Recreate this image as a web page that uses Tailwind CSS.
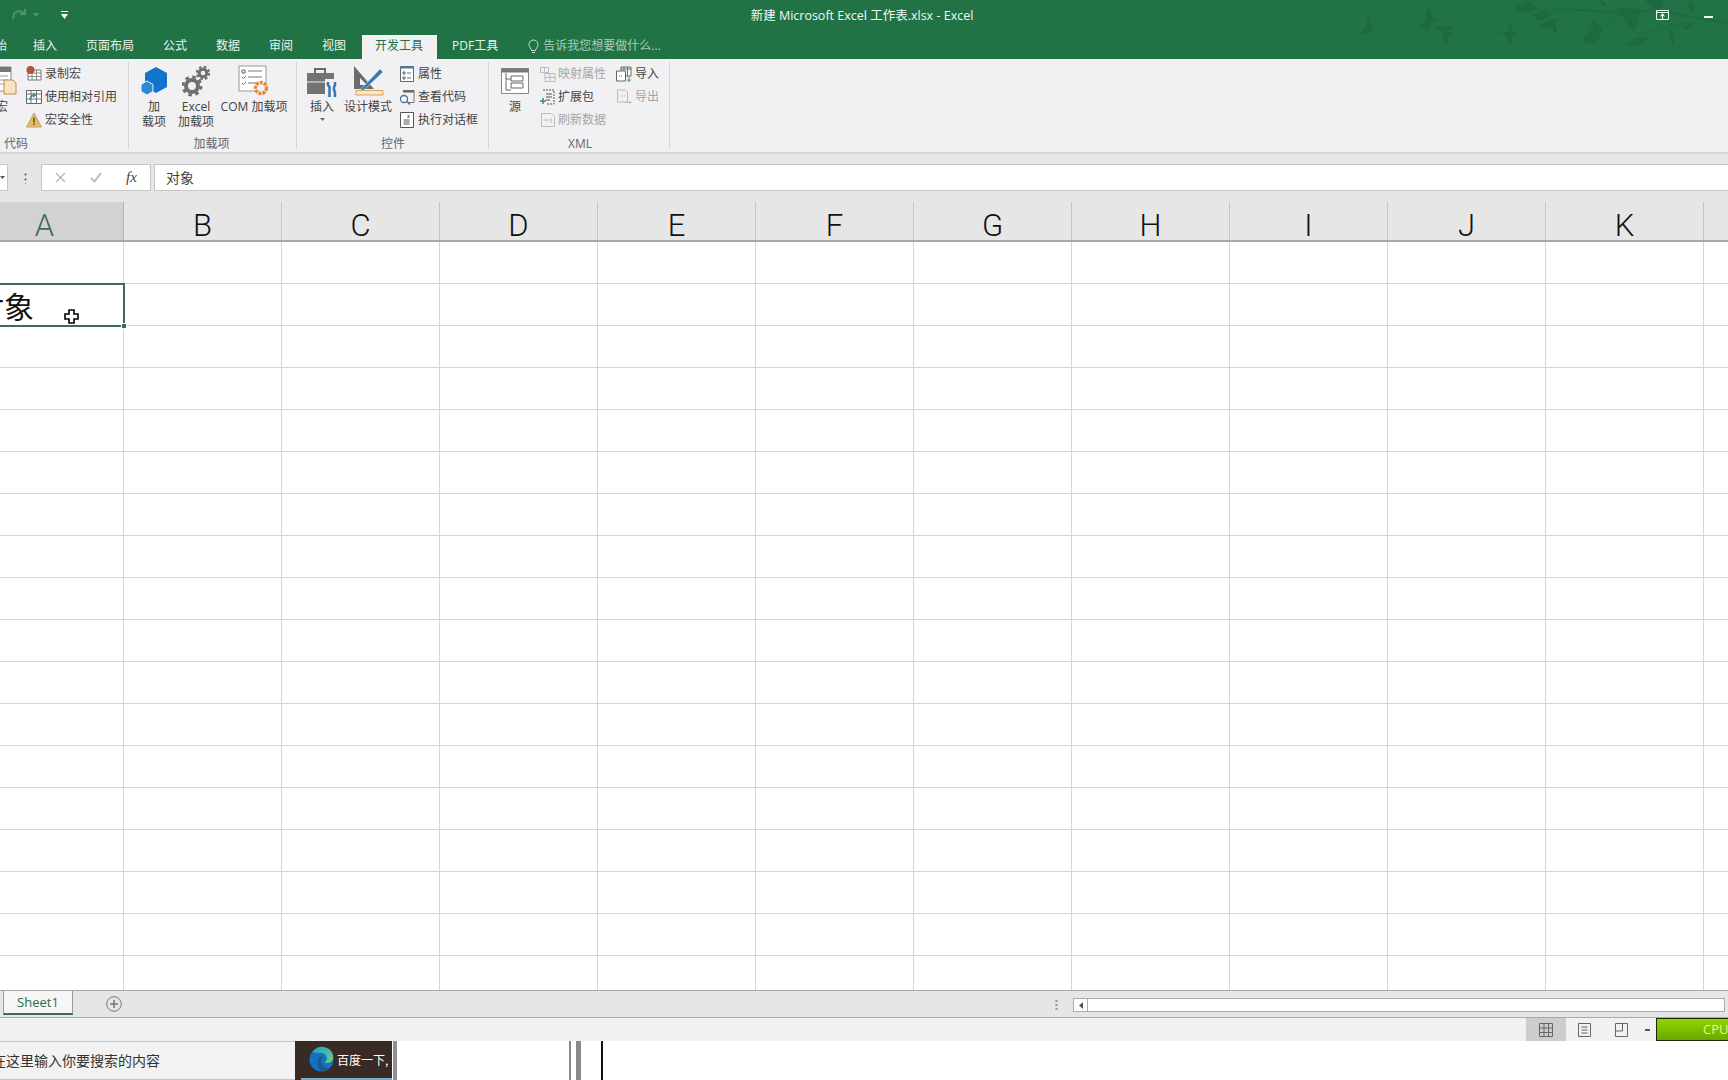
<!DOCTYPE html>
<html lang="zh-CN">
<head>
    <meta charset="UTF-8">
    <title>新建 Microsoft Excel 工作表.xlsx - Excel</title>
    <script src="https://cdn.jsdelivr.net/npm/@tailwindcss/browser@4"></script>
</head>
<body class="w-[1728px] h-[1080px] overflow-hidden bg-white text-[12px] text-[#444] font-['Open_Sans','Noto_Sans_CJK_SC',sans-serif]">
    <!-- title bar -->
    <header class="relative h-[35px] bg-[#217346] flex items-center text-white">
        <svg class="absolute left-[1300px] top-0 w-[428px] h-[59px]" viewBox="0 0 428 59" fill="#1d6a3f">
            <path d="M60 34q8-6 8-21q3 8 2 13l5 4l-5 1l0 2q-6 1-10 1z"/>
            <path d="M120 27q8-8 7-22q5 8 5 12l9 3l-9 2l-3 8q-4-2-9-3z"/>
            <path d="M135 26l18 0l-4 6l5 2l-5 2l-3 9q-3-5-3-10z"/>
            <path d="M198 33l10-1l2-8q3 4 3 7l5 2l-5 2l-2 10q-4-5-5-10z"/>
            <path d="M215 8q10-8 20 0q-6 5-12 5q-4 0-8-5z"/>
            <path d="M225 1q8 2 13 9q-6 2-10-1t-3-8z"/>
            <path d="M232 15q10-6 20-3q-4 8-10 8t-10-5z"/>
            <path d="M240 25q8-7 18-6q-3 7-9 9t-9-3z"/>
            <path d="M252 20q6 6 4 14q-5-5-4-14z"/>
            <path d="M282 42q2-12 20-15q0 12-8 15t-12 0z"/>
            <path d="M290 21q10 1 14 12q-9-2-14-12z"/>
            <path d="M316 8l24 1q-2 14-6 23q-9-10-18-24z"/>
            <path d="M326 45q6-9 22-8q-5 8-11 9t-11-1z"/>
            <path d="M370 28q6 8 3 17q-6-8-3-17z"/>
            <path d="M382 28q4-3 10-4q-2 5-5 6z"/>
            <path d="M345 0l15 0q5 6 1 10q-10-2-16-10z"/>
            <path d="M300 0q6 3 6 7q-5-1-6-7z"/>
            <path d="M390 0q6 5 2 12q-6-5-2-12z"/>
            <path d="M240 10q40-2 76 3q20 0 40-4q30 8 72 14" fill="none" stroke="#1d6a3f" stroke-width="1.5"/>
            <path d="M288 29q20-2 30-14M338 34q18-2 30-8q20-2 30-5" fill="none" stroke="#1d6a3f" stroke-width="1"/>
        </svg>
        <svg class="absolute left-[10px] top-[7px] w-[18px] h-[16px]" viewBox="0 0 18 16" fill="none" stroke="#4d9270" stroke-width="2"><path d="M14 7a6 6 0 0 0-10 0l-1 5"/><path d="M10 7h5V2"/></svg>
        <svg class="absolute left-[33px] top-[13px] w-[6px] h-[4px]" viewBox="0 0 6 4" fill="#4d9270"><path d="M0 0h6L3 4z"/></svg>
        <svg class="absolute left-[61px] top-[11px] w-[7px] h-[8px]" viewBox="0 0 7 8" fill="#fff"><path d="M0 0h7v1H0zM0 3h7L3.5 8z"/></svg>
        <h1 class="w-full text-center text-[12.500px] font-normal pb-[2px] pr-[4px] text-[#f2f7f4]">新建 Microsoft Excel 工作表.xlsx - Excel</h1>
        <svg class="absolute left-[1656px] top-[10px] w-[13px] h-[10px]" viewBox="0 0 13 10" fill="none" stroke="#eafff4"><path d="M.5.5h12v9H.5zM.5 2.5h12"/><path d="M6.5 9V5M4.5 6.5l2-2.5l2 2.5" stroke-width="1.2"/></svg>
        <div class="absolute left-[1704px] top-[16px] w-[9px] h-[2px] bg-[#eafff4]"></div>
    </header>

    <!-- ribbon tabs -->
    <nav class="h-[24px] bg-[#217346] flex items-stretch text-[#eaf3ee]">
        <span class="ml-[-5px] mr-[11.5px] pt-[2px]">始</span>
        <span class="px-[14.5px] pt-[2px]">插入</span>
        <span class="px-[14.5px] pt-[2px]">页面布局</span>
        <span class="px-[14.5px] pt-[2px]">公式</span>
        <span class="px-[14.5px] pt-[2px]">数据</span>
        <span class="px-[14.5px] pt-[2px]">审阅</span>
        <span class="px-[14.5px] pt-[2px]">视图</span>
        <span class="ml-[1.5px] w-[75px] pl-[13px] pt-[2px] bg-[#f1f0f2] text-[#217346]">开发工具</span>
        <span class="ml-[15px] pt-[2px]">PDF工具</span>
        <span class="ml-[29px] flex items-start pt-[2px] gap-[3px] text-[#a9cdb9] text-[12px]">
            <svg class="w-[13px] h-[16px] mt-[2px]" viewBox="0 0 13 16" fill="none" stroke="#cfe3d8"><path d="M4.5 11.5c0-2-2.5-3-2.5-6a4.5 4.5 0 0 1 9 0c0 3-2.5 4-2.5 6zM5 13.5h3"/></svg>
            告诉我您想要做什么...
        </span>
    </nav>

    <!-- ribbon -->
    <section class="h-[95px] bg-[#f1f0f2] border-b-2 border-[#d8d8d8] flex pt-[3px]">
        <!-- code group -->
        <div class="w-[129px] h-[87px] flex flex-col border-r border-[#d4d4d4]">
            <div class="h-[74px] shrink-0 flex">
                <div class="w-[26px] overflow-hidden">
                    <svg class="ml-[-8px] mt-[4px] w-[26px] h-[30px]" viewBox="0 0 26 30" fill="none"><path d="M1 1h18v24H1z" fill="#fff" stroke="#8a8a8a"/><path d="M1 1h18v5H1z" fill="#777"/><path d="M4 10h12M4 14h12M4 18h8" stroke="#999"/><path d="M12 14h9l3 3v11H12z" fill="#f8e4c4" stroke="#c98a46"/></svg>
                    <div class="ml-[-4px] mt-[3px] leading-[15px]">宏</div>
                </div>
                <div class="flex flex-col">
                    <div class="h-[23px] flex items-center gap-[3px]">
                        <svg class="w-[16px] h-[16px]" viewBox="0 0 16 16" fill="none"><path d="M2 4h13v10H2z" fill="#fff" stroke="#777"/><path d="M2 7h13M2 10.5h13M6 4v10M10.500 4v10" stroke="#888"/><circle cx="4.500" cy="4" r="4" fill="#b5533c"/></svg>
                        <span>录制宏</span>
                    </div>
                    <div class="h-[23px] flex items-center gap-[3px]">
                        <svg class="w-[16px] h-[16px]" viewBox="0 0 16 16" fill="none"><path d="M.5 1.500h15v13H.5z" fill="#fff" stroke="#666"/><path d="M.5 5h15M5 1.500v13M10.500 1.500v13M.5 10h15" stroke="#777"/><path d="M4 11q0-5 5-5M7 4l2.500 2L7 8" stroke="#3a8a96" stroke-width="1.300"/></svg>
                        <span>使用相对引用</span>
                    </div>
                    <div class="h-[23px] flex items-center gap-[3px]">
                        <svg class="w-[16px] h-[16px]" viewBox="0 0 16 16"><path d="M8 1l7.500 14H.5z" fill="#e6bd59" stroke="#b9a47a"/><path d="M7.300 5.500h1.400v5H7.300zM7.300 11.500h1.400v1.500H7.300z" fill="#444"/></svg>
                        <span>宏安全性</span>
                    </div>
                </div>
            </div>
            <div class="pl-[4px] leading-[16px] text-[#666]">代码</div>
        </div>

        <!-- add-ins group -->
        <div class="w-[168px] h-[87px] flex flex-col border-r border-[#d4d4d4]">
            <div class="h-[74px] shrink-0 flex items-start text-center leading-[15px]">
                <div class="ml-[7px] w-[36px] flex flex-col items-center">
                    <svg class="w-[28px] h-[30px] mt-[4px] mb-[3px]" viewBox="0 0 28 30"><path d="M16 1l11 6v14l-11 6l-11-6V7z" fill="#1173c9"/><path d="M7 15l6 3.500v7L7 29l-6-3.500v-7z" fill="#2a8ad8" stroke="#f1f0f2"/></svg>
                    <span>加<br>载项</span>
                </div>
                <div class="ml-[4px] w-[40px] flex flex-col items-center">
                    <svg class="w-[28px] h-[32px] mt-[3px] mb-[2px]" viewBox="0 0 28 32" fill="none" stroke="#707070">
                        <circle cx="10" cy="21" r="6" stroke-width="4"/>
                        <circle cx="10" cy="21" r="9" stroke-width="3" stroke-dasharray="3.500 3.570"/>
                        <circle cx="21" cy="8" r="3.800" stroke-width="3"/>
                        <circle cx="21" cy="8" r="6" stroke-width="2.500" stroke-dasharray="2.500 2.210"/>
                    </svg>
                    <span>Excel<br>加载项</span>
                </div>
                <div class="ml-[1px] w-[74px] flex flex-col items-center">
                    <svg class="w-[32px] h-[31px] mt-[3px] mb-[3px]" viewBox="0 0 32 31" fill="none"><path d="M1 1h27v25H1z" fill="#fff" stroke="#999"/><path d="M10 6h14M10 12h14M10 18h8" stroke="#777"/><path d="M4 5h3v3H4z" stroke="#666"/><path d="M4 12l1.500 1.500L8 11M4 18l1.500 1.500L8 17" stroke="#3a8a96"/><circle cx="23" cy="23" r="5.500" fill="#f1f0f2" stroke="#e0893c" stroke-width="3.500" stroke-dasharray="3 1"/></svg>
                    <span>COM 加载项</span>
                </div>
            </div>
            <div class="text-center pr-[2px] leading-[16px] text-[#666]">加载项</div>
        </div>

        <!-- controls group -->
        <div class="w-[192px] h-[87px] flex flex-col border-r border-[#d4d4d4]">
            <div class="h-[74px] shrink-0 flex items-start text-center leading-[15px]">
                <div class="ml-[5px] w-[40px] flex flex-col items-center">
                    <svg class="w-[32px] h-[31px] mt-[5px] mb-[1px]" viewBox="0 0 32 31" fill="none"><path d="M9 6V2h10v4" stroke="#6b6b6b" stroke-width="2"/><path d="M1 6h27v21H1z" fill="#737373"/><path d="M1 15h27" stroke="#f1f0f2"/><path d="M19 12h12v19H19z" fill="#f1f0f2" stroke="none"/><path d="M22 15v3l1.500 2v10M29 15v3l-1 2l0 3l1 2v5" stroke="#3577b3" stroke-width="2.500"/></svg>
                    <span>插入</span>
                    <svg class="w-[5px] h-[3px] mt-[4px]" viewBox="0 0 5 3" fill="#666"><path d="M0 0h5L2.500 3z"/></svg>
                </div>
                <div class="w-[52px] flex flex-col items-center">
                    <svg class="w-[32px] h-[33px] mt-[2px] mb-[2px]" viewBox="0 0 32 33" fill="none"><path d="M2 2v23h20z" fill="#6b6b6b"/><path d="M8 14v7h7z" fill="#f1f0f2"/><path d="M10 24L28 5l3 3l-19 18l-4 1z" fill="#3577b3" stroke="#f1f0f2" stroke-width=".5"/><path d="M4 26.500h27v4.500H4z" fill="#f8e7c7" stroke="#d4a463"/></svg>
                    <span>设计模式</span>
                </div>
                <div class="ml-[5px] flex flex-col text-left leading-normal">
                    <div class="h-[23px] flex items-center gap-[3px]">
                        <svg class="w-[16px] h-[16px]" viewBox="0 0 16 16" fill="none"><path d="M1.500.5h13v15h-13z" fill="#fff" stroke="#666"/><path d="M1.500.5h13v2h-13z" fill="#3f7fb3"/><path d="M4 6h2v2H4zM4 11h2v2H4z" stroke="#666"/><path d="M8 7h4M8 12h4" stroke="#666"/></svg>
                        <span>属性</span>
                    </div>
                    <div class="h-[23px] flex items-center gap-[3px]">
                        <svg class="w-[16px] h-[16px]" viewBox="0 0 16 16" fill="none"><path d="M4 1.500h11v12H8" stroke="#777"/><path d="M4 1.500h11v2H4z" fill="#666"/><circle cx="5" cy="10" r="3.500" fill="#fff" stroke="#3a6f94" stroke-width="1.300"/><path d="M8 12.500l3 3" stroke="#666" stroke-width="1.500"/></svg>
                        <span>查看代码</span>
                    </div>
                    <div class="h-[23px] flex items-center gap-[3px]">
                        <svg class="w-[16px] h-[16px]" viewBox="0 0 16 16" fill="none"><path d="M1.500.5h13v15h-13z" fill="#fff" stroke="#555"/><path d="M4.500 7h6v6h-6z" fill="#aaa"/><path d="M8.500 3h2v3h-2z" fill="#888"/></svg>
                        <span>执行对话框</span>
                    </div>
                </div>
            </div>
            <div class="text-center leading-[16px] pl-[1px] text-[#666]">控件</div>
        </div>

        <!-- xml group -->
        <div class="w-[181px] h-[87px] flex flex-col border-r border-[#d4d4d4]">
            <div class="h-[74px] shrink-0 flex items-start leading-normal">
                <div class="ml-[11px] w-[30px] flex flex-col items-center">
                    <svg class="w-[28px] h-[26px] mt-[6px] mb-[5px]" viewBox="0 0 28 26" fill="none"><path d="M.5.5h27v25H.5z" fill="#fff" stroke="#888"/><path d="M.5.5h27v4H.5z" fill="#777"/><path d="M5 5v17h5M5 11h5M10 8h12v5H10zM10 15h12v5H10z" stroke="#666"/></svg>
                    <span class="leading-[15px]">源</span>
                </div>
                <div class="ml-[10px] flex flex-col">
                    <div class="h-[23px] flex items-center gap-[2px] text-[#a6a6a6]">
                        <svg class="w-[16px] h-[16px]" viewBox="0 0 16 16" fill="none" stroke="#bbb"><path d="M.5 1.500h8v5h-8zM5 7.500h10v8H5zM5 11.500h10M10 7.500v8M4.500 1.500v5"/></svg>
                        <span>映射属性</span>
                    </div>
                    <div class="h-[23px] flex items-center gap-[2px]">
                        <svg class="w-[16px] h-[16px]" viewBox="0 0 16 16" fill="none" stroke="#555"><path d="M3 1h11v14H7" stroke-dasharray="2 1"/><path d="M6 5h6M6 8h6M6 11h4"/><path d="M3 9v6M0 12h6" stroke="#3a8a7a" stroke-width="1.500"/></svg>
                        <span>扩展包</span>
                    </div>
                    <div class="h-[23px] flex items-center gap-[2px] text-[#a6a6a6]">
                        <svg class="w-[16px] h-[16px]" viewBox="0 0 16 16" fill="none" stroke="#bbb"><path d="M1.500 1.500h10l3 3v10h-13z"/><path d="M4 8h5M11 6v5"/></svg>
                        <span>刷新数据</span>
                    </div>
                </div>
                <div class="ml-[10px] flex flex-col">
                    <div class="h-[23px] flex items-center gap-[3px]">
                        <svg class="w-[16px] h-[16px]" viewBox="0 0 16 16" fill="none" stroke="#666"><path d="M5 1h10v9H5z" fill="#fff"/><path d="M5 3h10M8 1v9M11.500 1v9"/><path d="M.5 5h9v10h-9z" fill="#fff"/><path d="M3 10h4" stroke-dasharray="1 1"/><path d="M13 11v4M11 13.500l2 2l2-2" stroke="#3a8a7a"/></svg>
                        <span>导入</span>
                    </div>
                    <div class="h-[23px] flex items-center gap-[3px] text-[#a6a6a6]">
                        <svg class="w-[16px] h-[16px]" viewBox="0 0 16 16" fill="none" stroke="#bbb"><path d="M1.500 1h8l2 2v10h-10z"/><path d="M4 7h5" stroke-dasharray="1 1"/><path d="M9 13.500h6M13 11.500l2 2l-2 2"/></svg>
                        <span>导出</span>
                    </div>
                </div>
            </div>
            <div class="text-center pl-[2px] leading-[16px] text-[#666]">XML</div>
        </div>
    </section>

    <!-- formula bar -->
    <section class="h-[48px] bg-[#e6e6e6] flex items-start pt-[10px]">
        <div class="w-[8px] h-[27px] bg-white border border-l-0 border-[#c6c6c6] flex items-center">
            <svg class="w-[5px] h-[3px]" viewBox="0 0 5 3" fill="#555"><path d="M0 0h5L2.500 3z"/></svg>
        </div>
        <div class="ml-[16px] w-[3px] h-[12px] mt-[8px] bg-[radial-gradient(circle,#8a8a8a_1px,transparent_1.300px)] bg-[length:3px_5px]"></div>
        <div class="ml-[14px] w-[110px] h-[27px] bg-white border border-[#c6c6c6] flex items-center">
            <svg class="ml-[13px] w-[11px] h-[11px]" viewBox="0 0 11 11" stroke="#bbb" stroke-width="1.500"><path d="M1 1l9 9M10 1l-9 9"/></svg>
            <svg class="ml-[24px] w-[12px] h-[11px]" viewBox="0 0 12 11" fill="none" stroke="#bbb" stroke-width="2"><path d="M1 6l3.500 3.500L11 1"/></svg>
            <span class="ml-[24px] italic text-[15px] text-[#444] font-['Liberation_Serif',serif]">fx</span>
        </div>
        <div class="ml-[3px] flex-1 h-[27px] bg-white border border-r-0 border-[#c6c6c6] pl-[11px] flex items-center text-[14px] text-[#444]">对象</div>
    </section>

    <!-- sheet -->
    <main class="h-[788px] overflow-hidden relative font-['Roboto',sans-serif]">
        <div id="headers" class="ml-[-34px] flex h-[40px] w-[1800px] font-light text-[31px] text-[#111] border-b-2 border-[#a9a9a9]"></div>
        <div id="rows" class="ml-[-34px] w-[1800px]"></div>
        <svg class="absolute left-[64px] top-[107px] w-[15px] h-[15px] z-20" viewBox="0 0 15 15"><path d="M5 1h5v4h4v5h-4v4H5v-4H1V5h4z" fill="#fff" stroke="#000" stroke-width="1.600"/></svg>
    </main>

    <!-- sheet tabs -->
    <section class="h-[28px] bg-[#e6e6e6] border-y border-[#a8a8a8] flex items-start">
        <div class="ml-[3px] w-[70px] h-[24px] bg-[#f6f6f6] border-x border-b-2 border-[#3e6b58] border-x-[#9a9a9a] text-center text-[13px] leading-[22px] text-[#2d6a4a]">Sheet1</div>
        <svg class="ml-[33px] mt-[5px] w-[16px] h-[16px]" viewBox="0 0 16 16" fill="none" stroke="#777"><circle cx="8" cy="8" r="7.300"/><path d="M8 4v8M4 8h8" stroke-width="1.500"/></svg>
        <div class="ml-[933px] mt-[8px] w-[3px] h-[11px] bg-[radial-gradient(circle,#9a9a9a_1px,transparent_1.300px)] bg-[length:3px_4px]"></div>
        <div class="ml-[15px] mt-[7px] w-[652px] h-[14px] bg-white border border-[#ababab] flex">
            <div class="w-[14px] border-r border-[#ababab] flex items-center justify-center">
                <svg class="w-[4px] h-[7px]" viewBox="0 0 4 7" fill="#555"><path d="M4 0v7L0 3.500z"/></svg>
            </div>
        </div>
    </section>

    <!-- status bar -->
    <footer class="h-[23px] bg-[#f1f0f2] flex items-stretch justify-end">
        <div class="w-[40px] bg-[#cdcdcd] flex items-center justify-center">
            <svg class="w-[14px] h-[14px]" viewBox="0 0 14 14" fill="none" stroke="#666"><path d="M.5.5h13v13H.5zM5 .5v13M9.500 .5v13M.5 5h13M.5 9.500h13"/></svg>
        </div>
        <div class="w-[36px] flex items-center justify-center">
            <svg class="w-[13px] h-[14px] ml-[1px]" viewBox="0 0 13 14" fill="none" stroke="#666"><path d="M.5.5h12v13H.5zM3.500 4h6M3.500 7h6M3.500 10h6"/></svg>
        </div>
        <div class="w-[38px] flex items-center justify-center">
            <svg class="w-[13px] h-[14px]" viewBox="0 0 13 14" fill="none" stroke="#666"><path d="M.5.5h12v13H.5zM.5 8h7V.5"/></svg>
        </div>
        <div class="w-[16px] flex items-center justify-start pl-[5px]"><div class="w-[5px] h-[2px] bg-[#555]"></div></div>
        <div class="w-[72px] h-[23px] bg-[linear-gradient(#92d400,#6aa800)] border border-r-0 border-[#1a2a00] pl-[46px] text-[13px] leading-[20px] text-[#d8ff8a] overflow-hidden whitespace-nowrap">CPU</div>
    </footer>

    <!-- taskbar peeking in at the bottom -->
    <section class="h-[39px] flex items-stretch bg-white">
        <div class="w-[295px] bg-[#f2f2f2] border-y border-[#c4c4c4] flex items-center text-[14px] text-[#333] overflow-hidden whitespace-nowrap font-['Noto_Sans_CJK_SC',sans-serif]">
            <span class="ml-[-8px]">在这里输入你要搜索的内容</span>
        </div>
        <div class="w-[97px] bg-[#3a2a26] flex flex-col text-white font-['Noto_Sans_CJK_SC',sans-serif]">
            <div class="flex-1 flex items-center pl-[14px] gap-[3px] text-[12px] overflow-hidden whitespace-nowrap">
                <svg class="w-[25px] h-[27px] shrink-0" viewBox="0 0 25 27">
                    <defs>
                        <linearGradient id="edgeTop" x1="0" y1="0" x2="1" y2="1"><stop offset="0" stop-color="#1e9bd8"/><stop offset="1" stop-color="#6fd46a"/></linearGradient>
                    </defs>
                    <circle cx="12.500" cy="13.500" r="12" fill="#1272c4"/>
                    <path d="M3 6q5-6 12-5t9 8q1 5-2 7q-4 2-7 0q3-1 3-4q-1-5-6-5q-5 0-9-1z" fill="url(#edgeTop)"/>
                    <path d="M9 13q2-4 5-2q-3 1-2 5q2 6 8 6q-3 4-8 3q-5-3-3-12z" fill="#3a2a26" opacity=".35"/>
                </svg>
                <span>百度一下,</span>
            </div>
            <div class="ml-[6px] h-[2px] bg-[#7fa9c8]"></div>
        </div>
        <div class="ml-[1px] w-[4px] bg-[#8f8f8f]"></div>
        <div class="ml-[172px] w-[2px] bg-[#8a8a8a]"></div>
        <div class="ml-[5px] w-[5px] bg-[#8a8a8a]"></div>
        <div class="ml-[20px] w-[2px] bg-[#111]"></div>
    </section>

    <script>
        const letters = ['A', 'B', 'C', 'D', 'E', 'F', 'G', 'H', 'I', 'J', 'K', ''];
        const headers = document.getElementById('headers');
        letters.forEach((l, i) => {
            const cell = document.createElement('div');
            cell.className = i === 0
                ? 'w-[158px] shrink-0 flex items-center justify-center pt-[10px] bg-[#d2d2d2] text-[#3e6b58] border-r border-[#b5b5b5]'
                : 'w-[158px] shrink-0 flex items-center justify-center pt-[10px] bg-[#e6e6e6] border-r border-[#c6c6c6]';
            cell.textContent = l;
            headers.appendChild(cell);
        });

        const rows = document.getElementById('rows');
        for (let r = 0; r < 18; r++) {
            const row = document.createElement('div');
            row.className = 'flex h-[42px]';
            letters.forEach((l, i) => {
                const cell = document.createElement('div');
                cell.className = 'w-[158px] shrink-0 border-r border-b border-[#d6d6d6] relative';
                if (r === 1 && i === 0) {
                    cell.className = 'w-[158px] shrink-0 relative z-10 pl-[8px] flex items-center text-[30px] text-[#111] font-[\'Noto_Sans_CJK_SC\',sans-serif]';
                    cell.innerHTML = '对象<div class="absolute left-0 right-[-1px] top-[-1px] bottom-[-1px] border-2 border-[#3e6b58]"></div><div class="absolute right-[-3px] bottom-[-3px] w-[6px] h-[6px] bg-[#3e6b58] border border-white"></div>';
                }
                row.appendChild(cell);
            });
            rows.appendChild(row);
        }
    </script>
</body>
</html>
